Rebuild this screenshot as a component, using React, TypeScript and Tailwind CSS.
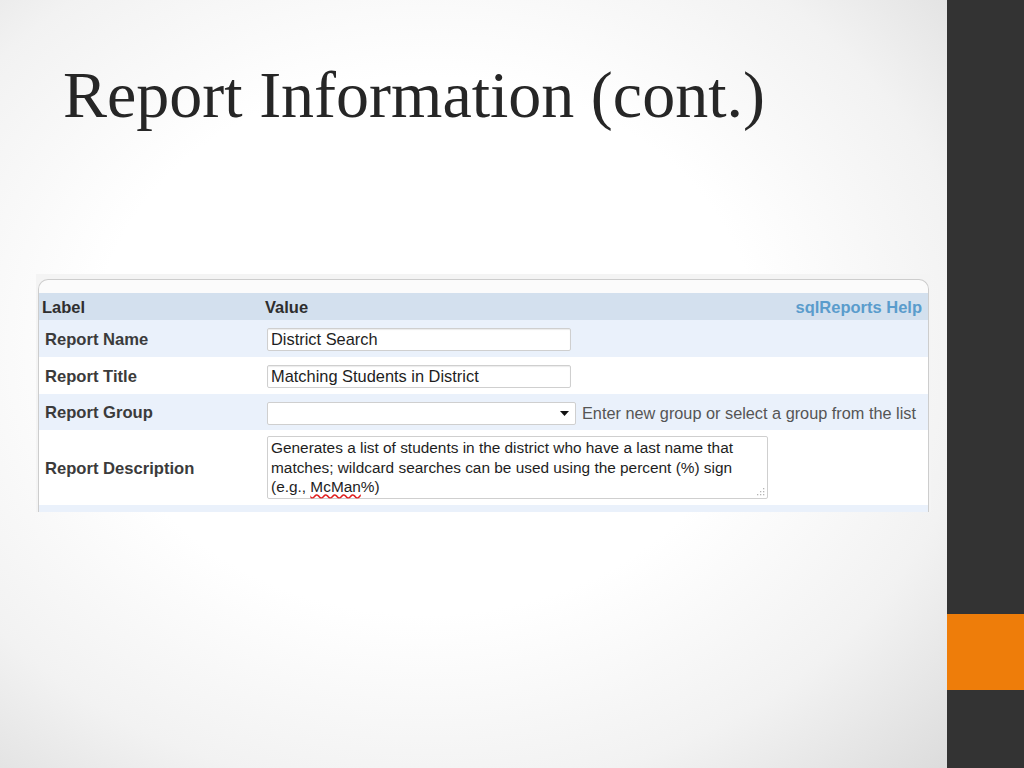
import React from 'react'

const rowLabel = 'pl-[6px] pt-[3px] text-[16.6px] font-bold text-[#3b3b3b]'

const Field: React.FC<{ value: string; width: string }> = ({ value, width }) => (
  <div className={`${width} mt-[2px] h-[23px] border border-[#cfcfcf] rounded-[2px] bg-white flex items-center px-[3px] text-[16.4px] text-[#1e1e1e] shadow-[inset_0_1px_1px_rgba(0,0,0,0.08)]`}>
    {value}
  </div>
)

export default function App() {
  return (
    <div className="flex w-[1024px] h-[768px] overflow-hidden" style={{ fontFamily: '"Liberation Sans", Arial, sans-serif' }}>
      <main className="flex-1 flex flex-col bg-[radial-gradient(ellipse_at_45%_45%,#ffffff_45%,#f2f2f2_75%,#dcdcdc_100%)]">
        <h1
          className="pl-[63px] pt-[62px] h-[274px] text-[66px] leading-none text-[#262626]"
          style={{ fontFamily: '"Liberation Serif", "Times New Roman", serif' }}
        >
          Report Information (cont.)
        </h1>

        {/* screenshot of the sqlReports form */}
        <div className="ml-[36px] w-[895px] h-[238px] bg-[#f4f4f4] pt-[5px] px-[2px] overflow-hidden">
          <div className="h-full border border-b-0 border-[#cdcdcd] rounded-t-[10px] bg-[#fbfbfb] pt-[13px] overflow-hidden">
            <div className="h-[27px] bg-[#d3e0ee] flex items-center pt-[2px] text-[16.5px] font-bold text-[#2e2e2e]">
              <div className="w-[226px] pl-[3px]">Label</div>
              <div className="flex-1">Value</div>
              <div className="pr-[6px] text-[#5a9ccc]">sqlReports Help</div>
            </div>

            <div className="h-[37px] bg-[#eaf1fb] flex items-center">
              <div className={`w-[226px] ${rowLabel}`}>Report Name</div>
              <div className="pl-[2px]">
                <Field value="District Search" width="w-[304px]" />
              </div>
            </div>

            <div className="h-[37px] bg-white flex items-center">
              <div className={`w-[226px] ${rowLabel}`}>Report Title</div>
              <div className="pl-[2px]">
                <Field value="Matching Students in District" width="w-[304px]" />
              </div>
            </div>

            <div className="h-[36px] bg-[#eaf1fb] flex items-center">
              <div className={`w-[226px] ${rowLabel}`}>Report Group</div>
              <div className="pl-[2px] pt-[2px] flex items-center">
                <div className="w-[309px] h-[23px] border border-[#cfcfcf] rounded-[2px] bg-white flex items-center justify-end pr-[6px]">
                  <svg width="9" height="5" viewBox="0 0 9 5">
                    <path d="M0 0h9L4.5 5z" fill="#111" />
                  </svg>
                </div>
                <span className="ml-[6px] text-[16.3px] text-[#555]">Enter new group or select a group from the list</span>
              </div>
            </div>

            <div className="h-[75px] bg-white flex items-center">
              <div className={`w-[226px] ${rowLabel}`}>Report Description</div>
              <div className="pl-[2px]">
                <div className="relative w-[501px] h-[63px] border border-[#cfcfcf] rounded-[2px] bg-white px-[3px] pt-[1px] text-[15.4px] leading-[19.5px] text-[#1e1e1e]">
                  Generates a list of students in the district who have a last name that matches; wildcard searches can be used using the percent (%) sign (e.g., <span className="underline decoration-wavy decoration-[#e02020]">McMan</span>%)
                  <svg className="absolute right-[2px] bottom-[2px]" width="8" height="8" viewBox="0 0 8 8">
                    <g fill="#b5b5b5">
                      <rect x="6" y="0" width="1.3" height="1.3" />
                      <rect x="3" y="3" width="1.3" height="1.3" />
                      <rect x="6" y="3" width="1.3" height="1.3" />
                      <rect x="0" y="6" width="1.3" height="1.3" />
                      <rect x="3" y="6" width="1.3" height="1.3" />
                      <rect x="6" y="6" width="1.3" height="1.3" />
                    </g>
                  </svg>
                </div>
              </div>
            </div>

            <div className="h-[20px] bg-[#eaf1fb]" />
          </div>
        </div>
      </main>

      <aside className="w-[77px] flex flex-col bg-[#333333]">
        <div className="h-[614px]" />
        <div className="h-[76px] bg-[#ee7d0a]" />
        <div className="flex-1" />
      </aside>
    </div>
  )
}
